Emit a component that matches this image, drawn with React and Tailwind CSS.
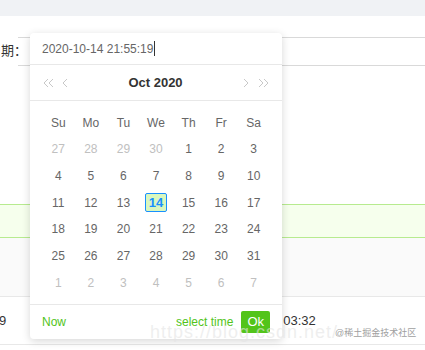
import React from 'react';

const weekDays = ['Su', 'Mo', 'Tu', 'We', 'Th', 'Fr', 'Sa'];

const weeks = [
  [[27, 0], [28, 0], [29, 0], [30, 0], [1, 1], [2, 1], [3, 1]],
  [[4, 1], [5, 1], [6, 1], [7, 1], [8, 1], [9, 1], [10, 1]],
  [[11, 1], [12, 1], [13, 1], [14, 1], [15, 1], [16, 1], [17, 1]],
  [[18, 1], [19, 1], [20, 1], [21, 1], [22, 1], [23, 1], [24, 1]],
  [[25, 1], [26, 1], [27, 1], [28, 1], [29, 1], [30, 1], [31, 1]],
  [[1, 0], [2, 0], [3, 0], [4, 0], [5, 0], [6, 0], [7, 0]],
];

function Chevron({ double, left }) {
  const d = left ? 'M5 1 L1 5 L5 9' : 'M1 1 L5 5 L1 9';
  return (
    <svg width={double ? 11 : 6} height="10" viewBox={double ? '0 0 11 10' : '0 0 6 10'} fill="none" stroke="#c8c8c8" strokeWidth="1">
      <path d={d} />
      {double && <path d={d} transform="translate(5 0)" />}
    </svg>
  );
}

function DatePanel() {
  return (
    <div className="absolute left-[30px] top-[33px] w-[252px] bg-white rounded-sm shadow-[0_2px_8px_rgba(0,0,0,0.16)] text-[12px]">
      <div className="h-[32px] flex items-center px-[12px] border-b border-[#e8e8e8] text-[#666]">
        <span>2020-10-14 21:55:19</span>
        <span className="w-px h-[15px] bg-[#333] ml-[1px]"></span>
      </div>
      <div className="h-[36px] flex items-center px-[13px] border-b border-[#e8e8e8]">
        <div className="flex items-center gap-[8px]">
          <Chevron double left />
          <Chevron left />
        </div>
        <div className="flex-1 text-center font-bold text-[13px] text-[#333]">Oct 2020</div>
        <div className="flex items-center gap-[9px]">
          <Chevron />
          <Chevron double />
        </div>
      </div>
      <div className="px-[12px] pt-[9px] pb-[8px] border-b border-[#e8e8e8]">
        <div className="grid grid-cols-7 h-[26px] items-center text-center text-[#666]">
          {weekDays.map((d) => (
            <span key={d}>{d}</span>
          ))}
        </div>
        {weeks.map((week, i) => (
          <div key={i} className="grid grid-cols-7 h-[26.7px] items-center text-center">
            {week.map(([n, cur], j) => {
              const selected = cur && n === 14;
              return (
                <div key={j} className="flex justify-center">
                  {selected ? (
                    <span className="w-[22px] h-[19px] flex items-center justify-center border border-[#1890ff] bg-[#d9f7be] text-[#1890ff] font-bold rounded-[2px] text-[13px]">
                      {n}
                    </span>
                  ) : (
                    <span className={cur ? 'text-[#666]' : 'text-[#c0c0c0]'}>{n}</span>
                  )}
                </div>
              );
            })}
          </div>
        ))}
      </div>
      <div className="h-[34px] flex items-center px-[12px] text-[#52c41a]">
        <span>Now</span>
        <span className="ml-auto">select time</span>
        <span className="ml-[8px] h-[22px] px-[6px] flex items-center bg-[#52c41a] text-white rounded-[2px] text-[13px]">Ok</span>
      </div>
    </div>
  );
}

export default function App() {
  return (
    <div className="relative w-[425px] h-[350px] overflow-hidden bg-white font-['Liberation_Sans','Noto_Sans_CJK_SC',sans-serif] text-[12px] text-[#666]">
      <div className="h-[16px] bg-[#f0f2f5]"></div>
      <div className="h-[21px]"></div>
      <div className="flex h-[28px] items-center">
        <span className="w-[30px] -ml-[12px] text-[#333] whitespace-nowrap text-[13px]">日期：</span>
        <div className="flex-1 h-[29px] border-y border-[#d9d9d9]"></div>
      </div>
      <div className="h-[139px]"></div>
      <div className="h-[34px] bg-[#f6ffed] border-y border-[#b7eb8f]"></div>
      <div className="h-[59px] bg-[#fafafa] border-b border-[#e8e8e8]"></div>
      <div className="h-[48px] flex items-center border-b border-[#e8e8e8] text-[#333] text-[13px]">
        <span className="-ml-[1px]">9</span>
        <span className="ml-[277px]">03:32</span>
      </div>
      <DatePanel />
      <span className="absolute left-[150px] top-[319px] text-[18px] text-[#e4e4e4]/60 tracking-[1px] pointer-events-none">https://blog.csdn.net/</span>
      <span className="absolute left-[335px] top-[327px] text-[9px] leading-[12px] text-[#a0a0a0] whitespace-nowrap">@稀土掘金技术社区</span>
    </div>
  );
}
